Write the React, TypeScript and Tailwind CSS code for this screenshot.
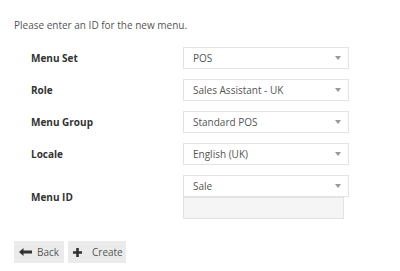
import React from 'react';

const rows = [
  { label: 'Menu Set', value: 'POS' },
  { label: 'Role', value: 'Sales Assistant - UK' },
  { label: 'Menu Group', value: 'Standard POS' },
  { label: 'Locale', value: 'English (UK)' },
];

function Select({ value }: { value: string }) {
  return (
    <div className="flex h-[22px] w-[166px] items-center justify-between border border-[#e3e3e3] bg-white pl-[9px] pr-[6px] text-[10px] text-[#555]">
      <span>{value}</span>
      <svg width="6" height="4" viewBox="0 0 6 4" className="mr-[1px]">
        <path d="M0 0H6L3 4Z" fill="#999" />
      </svg>
    </div>
  );
}

export default function App() {
  return (
    <div className="h-[271px] w-[400px] bg-white px-[14px] pt-[17px] text-[#555]" style={{ fontFamily: '"Open Sans", sans-serif' }}>
      <p className="text-[10px] leading-[16px]">Please enter an ID for the new menu.</p>

      <div className="mt-[14px]">
        {rows.map((r) => (
          <div key={r.label} className="mb-[10px] flex items-center">
            <div className="w-[169px] pl-[17px] text-[10px] font-bold text-[#333]">{r.label}</div>
            <Select value={r.value} />
          </div>
        ))}
        <div className="flex items-center">
          <div className="w-[169px] pl-[17px] text-[10px] font-bold text-[#333]">Menu ID</div>
          <div className="flex flex-col">
            <Select value="Sale" />
            <div className="h-[22px] w-[161px] border border-[#e3e3e3] bg-[#f5f5f5]" />
          </div>
        </div>
      </div>

      <div className="mt-[22px] flex gap-[4px]">
        <button className="flex h-[22px] w-[50px] items-center gap-[5px] bg-[#ebebeb] pl-[5px] text-[10px] text-[#555]">
          <svg width="13" height="8" viewBox="0 0 13 8">
            <path d="M0 4L4.5 0V2.6H13V5.4H4.5V8Z" fill="#333" />
          </svg>
          <span>Back</span>
        </button>
        <button className="flex h-[22px] w-[58px] items-center gap-[10px] bg-[#ebebeb] pl-[5px] text-[10px] text-[#555]">
          <svg width="9" height="9" viewBox="0 0 9 9">
            <path d="M3.2 0H5.8V3.2H9V5.8H5.8V9H3.2V5.8H0V3.2H3.2Z" fill="#333" />
          </svg>
          <span>Create</span>
        </button>
      </div>
    </div>
  );
}
